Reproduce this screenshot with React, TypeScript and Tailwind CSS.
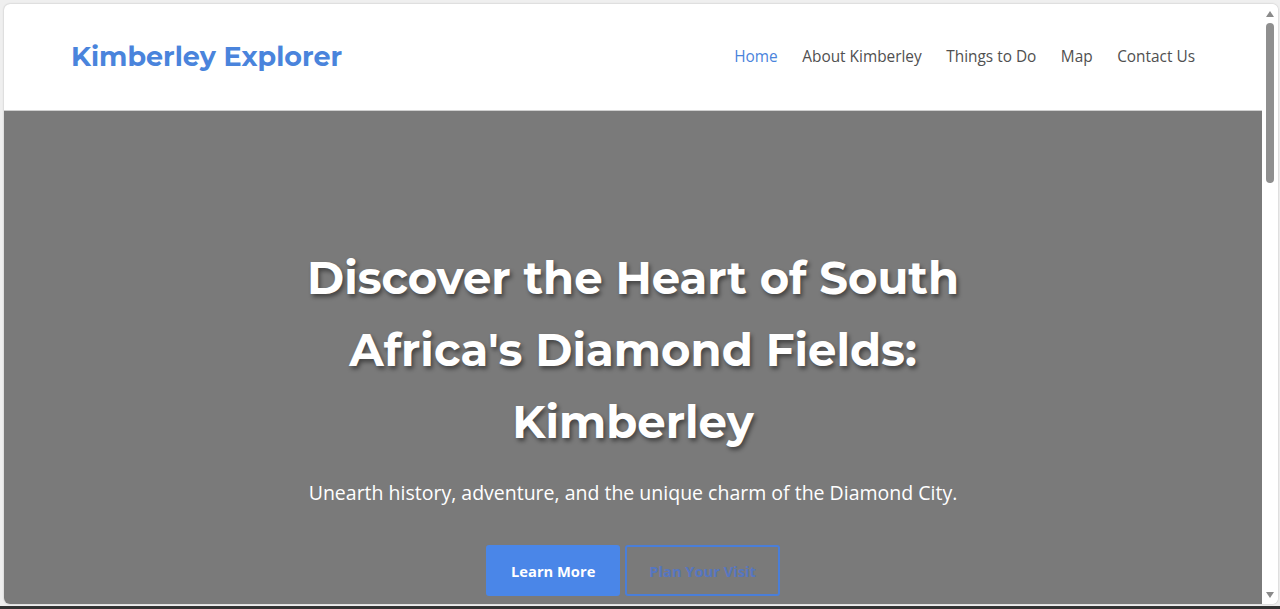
export default function App() {
  const navLinks = ["Home", "About Kimberley", "Things to Do", "Map", "Contact Us"];

  return (
    <div className="flex h-[609px] w-[1280px] flex-col overflow-hidden bg-[#efefef] font-['Open_Sans',sans-serif]">
      <div className="flex min-h-0 flex-1 pl-[4px] pr-[2px] pt-[4px] pb-[2px]">
        <div className="flex min-h-0 flex-1 overflow-hidden rounded-[6px] bg-white shadow-[0_0_2px_rgba(0,0,0,0.25)]">
          <div className="flex min-w-0 flex-1 flex-col">
            <header className="flex h-[107px] shrink-0 items-center justify-between border-b border-[#cfcfcf] px-[67px]">
              <a className="font-['Montserrat','Open_Sans',sans-serif] text-[27px] font-bold text-[#4a84dc]">
                Kimberley Explorer
              </a>
              <nav className="flex items-center gap-[24.5px] text-[15.4px] font-medium text-[#505050]">
                {navLinks.map((link, i) => (
                  <a key={link} className={i === 0 ? "text-[#4a84dc]" : ""}>
                    {link}
                  </a>
                ))}
              </nav>
            </header>
            <section className="flex flex-1 flex-col items-center bg-[#7a7a7a] pt-[131px] text-center">
              <h1 className="max-w-[700px] font-['Montserrat','Open_Sans',sans-serif] text-[45px] font-bold leading-[72px] text-white [text-shadow:2px_3px_4px_rgba(0,0,0,0.45)]">
                Discover the Heart of South Africa's Diamond Fields: Kimberley
              </h1>
              <p className="mt-[20px] text-[19.5px] text-white">
                Unearth history, adventure, and the unique charm of the Diamond City.
              </p>
              <div className="mt-[38px] flex gap-[5px]">
                <button className="h-[51px] rounded-[3px] bg-[#4a86e8] px-[25px] text-[14.7px] font-bold text-white">
                  Learn More
                </button>
                <button className="h-[51px] rounded-[3px] border-2 border-[#4a7ed8] px-[22px] text-[14.7px] font-bold text-[#5676c0]">
                  Plan Your Visit
                </button>
              </div>
            </section>
          </div>
          <div className="relative flex w-[16px] shrink-0 flex-col items-center bg-white">
            <svg width="8" height="6" viewBox="0 0 8 6" className="mt-[7px]">
              <path d="M0 6 L4 0 L8 6 Z" fill="#8a8a8a" />
            </svg>
            <div className="mt-[6px] h-[160px] w-[8px] rounded-full bg-[#8f8f8f]" />
            <div className="flex-1" />
            <svg width="8" height="6" viewBox="0 0 8 6" className="mb-[6px]">
              <path d="M0 0 L8 0 L4 6 Z" fill="#8a8a8a" />
            </svg>
          </div>
        </div>
      </div>
      <div className="h-[3px] shrink-0 bg-[#333]" />
    </div>
  );
}
